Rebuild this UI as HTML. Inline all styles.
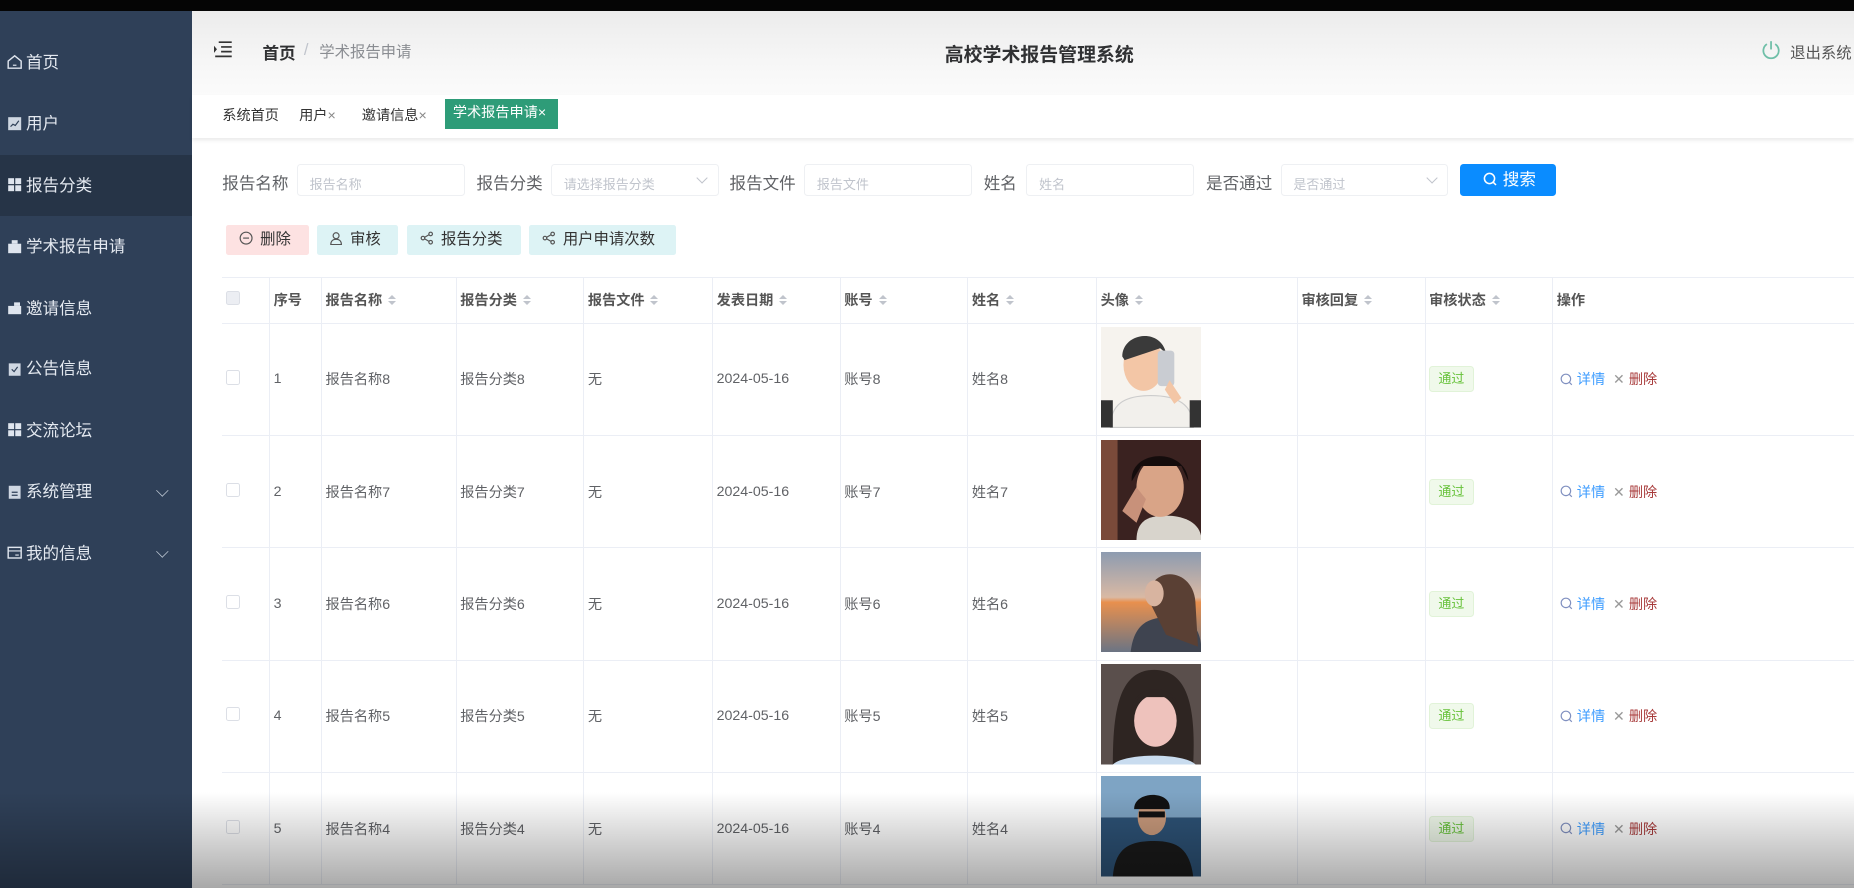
<!DOCTYPE html>
<html><head><meta charset="utf-8"><style>
*{margin:0;padding:0;box-sizing:border-box}
html,body{width:1854px;height:888px;overflow:hidden;background:#fff}
#w{zoom:1.18240;width:1568px;height:751px;position:relative;overflow:hidden;font-family:"Liberation Sans","Noto Sans CJK SC",sans-serif;color:#606266;background:#fff}
.abs{position:absolute}
#top{left:0;top:0;width:1568px;height:9px;background:#050505}
#side{left:0;top:9px;width:162px;height:742px;background:#2f4058}
.mi{position:absolute;left:0;width:162px;height:52px;color:#e4e9f0;font-size:14px;line-height:52px;padding-left:22px}
.mi.act{background:#263447}
.ic{position:absolute;left:6px;top:19px;width:13px;height:13px}
.chev{position:absolute;left:133px;top:20px;width:9px;height:9px;border-right:1.3px solid #b9c3cf;border-bottom:1.3px solid #b9c3cf;transform:rotate(45deg) scale(.8)}
#hdr{left:162px;top:9px;width:1406px;height:71px;background:linear-gradient(#ececec,#f6f6f6 60%,#fbfbfb)}
#tabs{left:162px;top:80px;width:1406px;height:37px;background:#fff;box-shadow:0 2px 3px rgba(0,0,0,.08)}
.tab{position:absolute;top:9px;font-size:12px;color:#333}
.lab{position:absolute;top:144px;font-size:14px;color:#606266}
.inp{position:absolute;top:139px;height:27px;border:1px solid #eef0f3;border-radius:3px;font-size:11px;color:#c0c4cc;padding:7px 10px;background:#fff}
.sel::after{content:"";position:absolute;right:10px;top:7px;width:6px;height:6px;border-right:1px solid #c0c4cc;border-bottom:1px solid #c0c4cc;transform:rotate(45deg)}
.btn{position:absolute;top:190px;height:26px;font-size:13px;color:#333;line-height:26px;border-radius:2px}
table{position:absolute;left:188px;top:234px;border-collapse:collapse;table-layout:fixed;font-size:12px}
td,th{border-left:1px solid #ebeef5;border-bottom:1px solid #ebeef5;padding:0 3px;text-align:left;white-space:nowrap;vertical-align:middle}
th{height:39px;font-weight:bold;color:#555;border-top:1px solid #ebeef5}
td{height:95px;color:#606266}
.sa{display:inline-block;width:7px;height:10px;margin-left:5px;vertical-align:-1px}
.sa::before,.sa::after{content:"";display:block;width:0;height:0;border-left:3.5px solid transparent;border-right:3.5px solid transparent}
.sa::before{border-bottom:4px solid #c0c4cc;margin-bottom:2px}
.sa::after{border-top:4px solid #c0c4cc}
.cb{display:inline-block;width:12px;height:12px;border:1px solid #dcdfe6;border-radius:2px;background:#fff}
th .cb{background:#eceef3}
.tag{display:inline-block;height:22px;line-height:20px;padding:0 7px;font-size:11px;color:#67c23a;background:#f0f9eb;border:1px solid #e1f3d8;border-radius:3px}
td.op{font-size:12px;padding-left:6px}
.mg{width:11px;height:11px;vertical-align:-1px;margin-right:3px}
#fade{left:0;top:670px;width:1568px;height:81px;background:linear-gradient(rgba(0,0,0,0),rgba(0,0,0,.34))}
</style></head><body><div id="w">
<div class="abs" id="top"></div>
<div class="abs" id="side">
 <div class="mi" style="top:18px"><svg class="ic" viewBox="0 0 13 13"><path d="M1 6L6.5 1.5L12 6V12H1Z" fill="none" stroke="#dfe5ee" stroke-width="1.2"/><path d="M5 9.5h3" stroke="#dfe5ee"/></svg>首页</div>
 <div class="mi" style="top:70px"><svg class="ic" viewBox="0 0 13 13"><rect x="1" y="1" width="11" height="11" fill="#cfd7e2"/><path d="M3 9l2-2 2 1 3-4" stroke="#2f4058" fill="none"/></svg>用户</div>
 <div class="mi act" style="top:122px"><svg class="ic" viewBox="0 0 13 13" fill="#dfe5ee"><rect x="1" y="1" width="5" height="5"/><rect x="7" y="1" width="5" height="5"/><rect x="1" y="7" width="5" height="5"/><rect x="7" y="7" width="5" height="5"/></svg>报告分类</div>
 <div class="mi" style="top:174px"><svg class="ic" viewBox="0 0 13 13" fill="#dfe5ee"><rect x="4" y="1" width="5" height="3"/><rect x="1" y="4" width="11" height="8"/></svg>学术报告申请</div>
 <div class="mi" style="top:226px"><svg class="ic" viewBox="0 0 13 13" fill="#dfe5ee"><rect x="1" y="5" width="11" height="7"/><rect x="6" y="2" width="5" height="3"/></svg>邀请信息</div>
 <div class="mi" style="top:277px"><svg class="ic" viewBox="0 0 13 13"><rect x="1.5" y="2" width="10" height="10.5" fill="#cfd7e2"/><path d="M4 7l2 2 3-4" stroke="#2f4058" fill="none"/></svg>公告信息</div>
 <div class="mi" style="top:329px"><svg class="ic" viewBox="0 0 13 13" fill="#dfe5ee"><rect x="1" y="1" width="5" height="5"/><rect x="7" y="1" width="5" height="5"/><rect x="1" y="7" width="5" height="5"/><rect x="7" y="7" width="5" height="5"/></svg>交流论坛</div>
 <div class="mi" style="top:381px"><svg class="ic" viewBox="0 0 13 13"><rect x="1.5" y="1.5" width="10" height="11" fill="#cfd7e2"/><path d="M4 7h5M4 9.5h5" stroke="#2f4058"/></svg>系统管理<span class="chev"></span></div>
 <div class="mi" style="top:433px"><svg class="ic" viewBox="0 0 13 13"><rect x="1" y="2" width="11" height="9" fill="none" stroke="#dfe5ee" stroke-width="1.2"/><path d="M1 5h11M7 8.5h3" stroke="#dfe5ee"/></svg>我的信息<span class="chev"></span></div>
</div>
<div class="abs" id="hdr">
 <svg class="abs" style="left:19px;top:26px" width="16" height="14" viewBox="0 0 16 14"><path d="M4 1h11M6 5h9M6 9h9M1 13h14" stroke="#333" stroke-width="1.4"/><path d="M0 4l2.5 3L0 10z" fill="#333"/></svg>
 <div class="abs" style="left:60px;top:25px;font-size:14px;font-weight:bold;color:#303133">首页</div>
 <div class="abs" style="left:95px;top:25px;font-size:14px;color:#c0c4cc">/</div>
 <div class="abs" style="left:108px;top:25px;font-size:13px;color:#8a8d92">学术报告申请</div>
 <div class="abs" style="left:637px;top:25px;font-size:16px;font-weight:bold;color:#303133">高校学术报告管理系统</div>
 <svg class="abs" style="left:1327px;top:25px" width="17" height="17" viewBox="0 0 17 17"><path d="M5 3.5A6.5 6.5 0 1 0 12 3.5" fill="none" stroke="#6fbfa8" stroke-width="1.5"/><path d="M8.5 1v7" stroke="#6fbfa8" stroke-width="1.5"/></svg>
 <div class="abs" style="left:1352px;top:26px;font-size:13px;color:#555">退出系统</div>
</div>
<div class="abs" id="tabs">
 <div class="tab" style="left:26px">系统首页</div>
 <div class="tab" style="left:91px">用户<span style="color:#888">×</span></div>
 <div class="tab" style="left:144px">邀请信息<span style="color:#888">×</span></div>
 <div class="abs" style="left:214px;top:4px;width:96px;height:25px;background:#2e9c78;color:#fff;font-size:12px;line-height:25px;padding-left:7px">学术报告申请×</div>
</div>
<div class="lab" style="left:188px">报告名称</div><div class="inp" style="left:251px;width:142px">报告名称</div>
<div class="lab" style="left:403px">报告分类</div><div class="inp sel" style="left:466px;width:142px">请选择报告分类</div>
<div class="lab" style="left:617px">报告文件</div><div class="inp" style="left:680px;width:142px">报告文件</div>
<div class="lab" style="left:832px">姓名</div><div class="inp" style="left:868px;width:142px">姓名</div>
<div class="lab" style="left:1020px">是否通过</div><div class="inp sel" style="left:1083px;width:142px">是否通过</div>
<div class="abs" style="left:1235px;top:139px;width:81px;height:27px;background:#0a8cff;border-radius:3px;color:#fff;font-size:14px;line-height:27px;padding-left:19px"><svg width="12" height="12" viewBox="0 0 12 12" style="vertical-align:-1px;margin-right:5px"><circle cx="5.5" cy="5.5" r="4.3" fill="none" stroke="#fff" stroke-width="1.3"/><path d="M8.5 8.5L11 11" stroke="#fff" stroke-width="1.3"/></svg>搜索</div>
<div class="btn" style="left:191px;width:70px;background:#fde2e2;padding-left:11px"><svg width="12" height="12" viewBox="0 0 12 12" style="vertical-align:-1px;margin-right:6px"><circle cx="6" cy="6" r="5" fill="none" stroke="#555"/><path d="M3.5 6h5" stroke="#555"/></svg>删除</div>
<div class="btn" style="left:268px;width:69px;background:#ddf3f5;padding-left:10px"><svg width="12" height="12" viewBox="0 0 12 12" style="vertical-align:-1px;margin-right:6px"><circle cx="6" cy="4" r="2.5" fill="none" stroke="#555"/><path d="M1.5 11.5c0-3 2-4.5 4.5-4.5s4.5 1.5 4.5 4.5z" fill="none" stroke="#555"/></svg>审核</div>
<div class="btn" style="left:344px;width:97px;background:#ddf3f5;padding-left:11px"><svg width="12" height="12" viewBox="0 0 12 12" style="vertical-align:-1px;margin-right:6px"><circle cx="9" cy="2.5" r="1.5" fill="none" stroke="#555"/><circle cx="2.5" cy="6" r="1.5" fill="none" stroke="#555"/><circle cx="9" cy="9.5" r="1.5" fill="none" stroke="#555"/><path d="M4 5.3L7.6 3.2M4 6.7l3.6 2.1" stroke="#555"/></svg>报告分类</div>
<div class="btn" style="left:447px;width:125px;background:#ddf3f5;padding-left:11px"><svg width="12" height="12" viewBox="0 0 12 12" style="vertical-align:-1px;margin-right:6px"><circle cx="9" cy="2.5" r="1.5" fill="none" stroke="#555"/><circle cx="2.5" cy="6" r="1.5" fill="none" stroke="#555"/><circle cx="9" cy="9.5" r="1.5" fill="none" stroke="#555"/><path d="M4 5.3L7.6 3.2M4 6.7l3.6 2.1" stroke="#555"/></svg>用户申请次数</div>
<table>
<colgroup><col style="width:40px"><col style="width:44px"><col style="width:114px"><col style="width:108px"><col style="width:109px"><col style="width:108px"><col style="width:108px"><col style="width:109px"><col style="width:170px"><col style="width:108px"><col style="width:108px"><col style="width:255px"></colgroup>
<tr><th style="border-left:none"><span class="cb"></span></th><th>序号</th><th>报告名称<i class="sa"></i></th><th>报告分类<i class="sa"></i></th><th>报告文件<i class="sa"></i></th><th>发表日期<i class="sa"></i></th><th>账号<i class="sa"></i></th><th>姓名<i class="sa"></i></th><th>头像<i class="sa"></i></th><th>审核回复<i class="sa"></i></th><th>审核状态<i class="sa"></i></th><th>操作</th></tr>
<tr><td style="border-left:none"><span class="cb"></span></td><td>1</td><td>报告名称8</td><td>报告分类8</td><td>无</td><td>2024-05-16</td><td>账号8</td><td>姓名8</td><td style="padding:2px 2px 2px 3px"><svg width="85" height="85" viewBox="0 0 85 85"><rect width="85" height="85" fill="#f6f3ee"/><path d="M8 85C8 65 20 58 42 58S78 65 78 85z" fill="#f2f0ec" stroke="#ccc"/><path d="M0 62h10v23H0zM75 62h10v23H75z" fill="#333"/><ellipse cx="36" cy="32" rx="17" ry="22" fill="#f3c6a6"/><path d="M18 25C18 5 50 0 55 22L50 18 20 28z" fill="#3a3a3a"/><rect x="48" y="20" width="14" height="30" rx="3" fill="#c9ccd2"/><path d="M58 45l10 15-6 5-8-12z" fill="#f3c6a6"/></svg></td><td></td><td><span class="tag">通过</span></td><td class="op"><svg class="mg" viewBox="0 0 11 11"><circle cx="5" cy="5" r="4" fill="none" stroke="#8090c0"/><path d="M8 8l2 2" stroke="#8090c0"/></svg><span style="color:#409eff">详情</span> &nbsp;<span style="color:#999">✕</span> <span style="color:#a83b3b">删除</span></td></tr>
<tr><td style="border-left:none"><span class="cb"></span></td><td>2</td><td>报告名称7</td><td>报告分类7</td><td>无</td><td>2024-05-16</td><td>账号7</td><td>姓名7</td><td style="padding:2px 2px 2px 3px"><svg width="85" height="85" viewBox="0 0 85 85"><rect width="85" height="85" fill="#3a2220"/><rect x="0" width="14" height="85" fill="#7a4a3a"/><path d="M30 85C30 68 40 64 55 64S85 70 85 85z" fill="#d8d4cc"/><ellipse cx="50" cy="40" rx="20" ry="25" fill="#d9a487"/><path d="M26 35C24 8 72 5 74 35L68 22 34 22z" fill="#140c0c"/><path d="M18 60l12-20 8 10-8 20z" fill="#c8917a"/></svg></td><td></td><td><span class="tag">通过</span></td><td class="op"><svg class="mg" viewBox="0 0 11 11"><circle cx="5" cy="5" r="4" fill="none" stroke="#8090c0"/><path d="M8 8l2 2" stroke="#8090c0"/></svg><span style="color:#409eff">详情</span> &nbsp;<span style="color:#999">✕</span> <span style="color:#a83b3b">删除</span></td></tr>
<tr><td style="border-left:none"><span class="cb"></span></td><td>3</td><td>报告名称6</td><td>报告分类6</td><td>无</td><td>2024-05-16</td><td>账号6</td><td>姓名6</td><td style="padding:2px 2px 2px 3px"><svg width="85" height="85" viewBox="0 0 85 85"><defs><linearGradient id="g3" x1="0" y1="0" x2="0" y2="1"><stop offset="0" stop-color="#8d9bb0"/><stop offset=".45" stop-color="#d9b9a4"/><stop offset=".5" stop-color="#e8904e"/><stop offset="1" stop-color="#6a7484"/></linearGradient></defs><rect width="85" height="85" fill="url(#g3)"/><path d="M25 85C28 60 40 55 60 55S85 70 85 85z" fill="#3f4450"/><path d="M40 40C40 10 80 12 80 45L82 80 55 70z" fill="#5a4034"/><ellipse cx="45" cy="35" rx="8" ry="11" fill="#d8b4a0"/></svg></td><td></td><td><span class="tag">通过</span></td><td class="op"><svg class="mg" viewBox="0 0 11 11"><circle cx="5" cy="5" r="4" fill="none" stroke="#8090c0"/><path d="M8 8l2 2" stroke="#8090c0"/></svg><span style="color:#409eff">详情</span> &nbsp;<span style="color:#999">✕</span> <span style="color:#a83b3b">删除</span></td></tr>
<tr><td style="border-left:none"><span class="cb"></span></td><td>4</td><td>报告名称5</td><td>报告分类5</td><td>无</td><td>2024-05-16</td><td>账号5</td><td>姓名5</td><td style="padding:2px 2px 2px 3px"><svg width="85" height="85" viewBox="0 0 85 85"><rect width="85" height="85" fill="#5a4f4c"/><path d="M10 85C10 40 15 5 45 5S80 40 78 85z" fill="#2e2522"/><ellipse cx="46" cy="48" rx="18" ry="22" fill="#eec2bc"/><path d="M26 40C26 15 66 15 66 40L60 28H32z" fill="#2e2522"/><path d="M10 85C20 75 70 75 80 85z" fill="#c9dcef"/></svg></td><td></td><td><span class="tag">通过</span></td><td class="op"><svg class="mg" viewBox="0 0 11 11"><circle cx="5" cy="5" r="4" fill="none" stroke="#8090c0"/><path d="M8 8l2 2" stroke="#8090c0"/></svg><span style="color:#409eff">详情</span> &nbsp;<span style="color:#999">✕</span> <span style="color:#a83b3b">删除</span></td></tr>
<tr><td style="border-left:none"><span class="cb"></span></td><td>5</td><td>报告名称4</td><td>报告分类4</td><td>无</td><td>2024-05-16</td><td>账号4</td><td>姓名4</td><td style="padding:2px 2px 2px 3px"><svg width="85" height="85" viewBox="0 0 85 85"><rect width="85" height="35" fill="#7ea4c4"/><rect y="35" width="85" height="50" fill="#2d5276"/><path d="M10 85C12 60 25 55 45 55S75 62 78 85z" fill="#1a1a1a"/><ellipse cx="43" cy="35" rx="12" ry="15" fill="#c99a7c"/><path d="M28 28C28 12 60 12 58 28z" fill="#111"/><rect x="32" y="30" width="22" height="5" fill="#111"/></svg></td><td></td><td><span class="tag">通过</span></td><td class="op"><svg class="mg" viewBox="0 0 11 11"><circle cx="5" cy="5" r="4" fill="none" stroke="#8090c0"/><path d="M8 8l2 2" stroke="#8090c0"/></svg><span style="color:#409eff">详情</span> &nbsp;<span style="color:#999">✕</span> <span style="color:#a83b3b">删除</span></td></tr>
</table>
<div class="abs" id="fade"></div>
</div></body></html>
